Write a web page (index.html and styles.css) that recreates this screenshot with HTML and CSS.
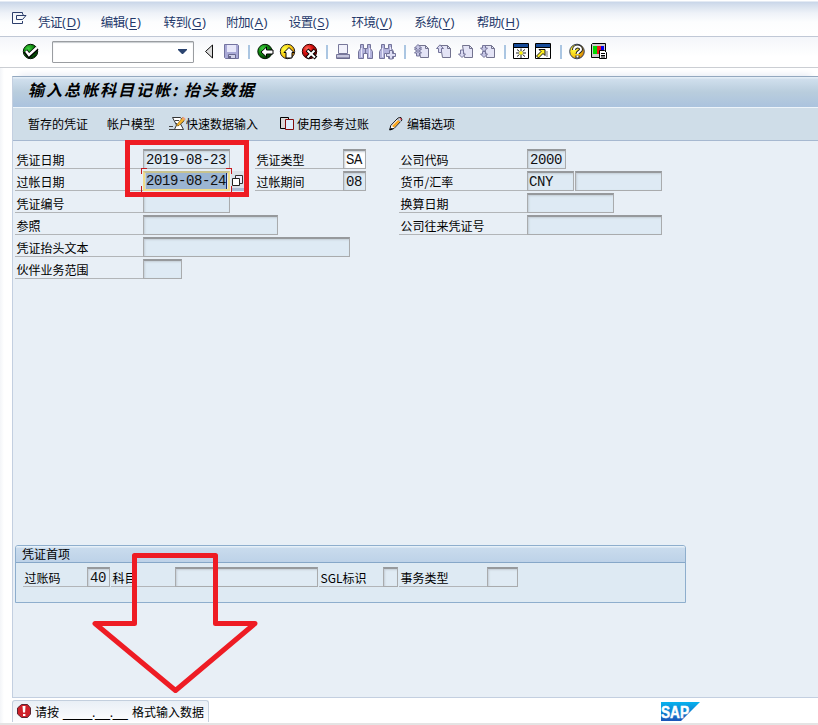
FILE: index.html
```html
<!DOCTYPE html>
<html lang="zh-CN">
<head>
<meta charset="utf-8">
<title>输入总帐科目记帐: 抬头数据</title>
<link rel="stylesheet" href="styles.css">
</head>
<body>
<svg class="defs" width="0" height="0" aria-hidden="true">
  <defs>
    <radialGradient id="green" cx=".35" cy=".3" r=".75"><stop offset="0" stop-color="#3fd03f"/><stop offset=".5" stop-color="#0c840c"/><stop offset="1" stop-color="#002800"/></radialGradient>
    <radialGradient id="yellow" cx=".3" cy=".35" r=".8"><stop offset="0" stop-color="#ffff40"/><stop offset=".6" stop-color="#f8c810"/><stop offset="1" stop-color="#c06000"/></radialGradient>
    <radialGradient id="red" cx=".35" cy=".3" r=".8"><stop offset="0" stop-color="#ff7060"/><stop offset=".4" stop-color="#dc1010"/><stop offset="1" stop-color="#500000"/></radialGradient>
    <linearGradient id="sapblue" x1="0" y1="0" x2="0" y2="1"><stop offset="0" stop-color="#06b2ee"/><stop offset="1" stop-color="#1b55b8"/></linearGradient>
    <g id="page"><path d="M4.500 1.500h7l3 3v9h-8z" fill="#e4e4f6" stroke="#73738f"/><path d="M11.500 1.500v3h3" fill="none" stroke="#73738f"/></g>
  </defs>
</svg>
<div class="window">
  <nav class="menubar">
    <svg class="menu-icon" width="16" height="14" viewBox="0 0 16 14"><path d="M11.500 3V1.500h-10v11h10V10" fill="none" stroke="#2b3d6b"/><path d="M5.500 8.500v-4h9.500L11.500 8.500h-6M12 3v2" fill="none" stroke="#2b3d6b"/></svg>
    <span class="menu">凭证<i>(<u>D</u>)</i></span><span class="menu">编辑<i>(<u>E</u>)</i></span><span class="menu">转到<i>(<u>G</u>)</i></span><span class="menu">附加<i>(<u>A</u>)</i></span><span class="menu">设置<i>(<u>S</u>)</i></span><span class="menu">环境<i>(<u>V</u>)</i></span><span class="menu">系统<i>(<u>Y</u>)</i></span><span class="menu">帮助<i>(<u>H</u>)</i></span>
  </nav>

  <div class="toolbar">
    <svg class="ok" width="18" height="16" viewBox="0 0 18 16"><circle cx="8.500" cy="7.500" r="7.200" fill="url(#green)" stroke="#031703"/><path d="M3.500 7l3.500 4.500L15 4" fill="none" stroke="#000" stroke-width="4.500"/><path d="M4 7l3 4 8-7.500" fill="none" stroke="#fff" stroke-width="2.400"/></svg>
    <div class="combo"><svg width="9" height="5" viewBox="0 0 9 5"><path d="M0 0h9v1L5 5H4L0 1z" fill="#2b4470"/></svg></div>
    <svg class="collapse" width="10" height="16" viewBox="0 0 10 16"><path d="M8.500 1v13L1.500 7.500z" fill="#dcdcdc" stroke="#111"/></svg>
    <svg class="save" width="16" height="16" viewBox="0 0 16 16"><path d="M.5.5h13l1 1v13H1.500l-1-1z" fill="#a9a9d6" stroke="#7373a0"/><path d="M3 1h9v7H3z" fill="#e7e7fa"/><path d="M4.500 10.500h7v4h-7z" fill="#d2d2ea" stroke="#68688e"/><path d="M5 12h2v2H5z" fill="#68688e"/></svg>
    <span class="sep"></span>
    <div class="icons">
      <svg width="16" height="16" viewBox="0 0 16 16"><circle cx="7" cy="7.500" r="7.200" fill="url(#green)" stroke="#031703"/><path d="M3 8l5.500-5v3H15v4H8.500v3z" fill="#fff" stroke="#000"/></svg>
      <svg width="16" height="16" viewBox="0 0 16 16"><circle cx="7.500" cy="7.500" r="7.200" fill="url(#yellow)" stroke="#222"/><path d="M9 3.500l5 5h-2v5.500H6V8.500H4z" fill="#fff" stroke="#000"/></svg>
      <svg width="16" height="16" viewBox="0 0 16 16"><circle cx="7.500" cy="7.500" r="7.200" fill="url(#red)" stroke="#300"/><path d="M5 6l9 8M13 6l-8 8" stroke="#000" stroke-width="4"/><path d="M5.500 6.500l7.500 7M12.500 6.500l-7 7" stroke="#fff" stroke-width="2"/></svg>
    </div>
    <span class="sep"></span>
    <div class="icons">
      <svg width="16" height="16" viewBox="0 0 16 16"><path d="M2.500.5h9v9h-9z" fill="#f1f1fb" stroke="#77779a"/><path d="M.5 10.500h13v4H.5z" fill="#c5c5de" stroke="#77779a"/><path d="M1 14h13" stroke="#5f5f82"/></svg>
      <svg width="16" height="16" viewBox="0 0 16 16"><path d="M2.500.5h3v4h4v-4h3v4l2 3v7h-5v-5h-4v5h-5v-7l2-3z" fill="#b3b3dc" stroke="#74749a"/><path d="M3.500 4v9M11.500 4v9" stroke="#e8e8fb"/><path d="M7.500 5v4" stroke="#74749a"/></svg>
      <svg width="16" height="16" viewBox="0 0 16 16"><path d="M1.500.5h3v4h4v-4h3v4l2 3v7h-5v-5h-4v5h-5v-7l2-3z" fill="#b3b3dc" stroke="#74749a"/><path d="M2.500 4v9M10.500 3v5" stroke="#e8e8fb"/><path d="M9.500 6.500h3v3h3v3h-3v2.500h-3v-2.500h-3v-3h3z" fill="#dedef4" stroke="#74749a"/></svg>
    </div>
    <span class="sep"></span>
    <div class="icons">
      <svg width="16" height="16" viewBox="0 0 16 16"><use href="#page"/><path d="M4 .5l3.500 3.500H5.500v1h2L4 8.500.5 5h2V4h-2zM4 5.500l3.500 3.500H5.500v3H2.500V9h-2z" fill="#c6c6e5" stroke="#74749a"/></svg>
      <svg width="16" height="16" viewBox="0 0 16 16"><use href="#page"/><path d="M4 .8l3.500 3.700H5.500v4h-3v-4h-2z" fill="#dadaf2" stroke="#74749a"/></svg>
      <svg width="16" height="16" viewBox="0 0 16 16"><use href="#page"/><path d="M4 13.500L7.500 10H5.500V6h-3v4h-2z" fill="#dadaf2" stroke="#74749a"/></svg>
      <svg width="16" height="16" viewBox="0 0 16 16"><use href="#page"/><path d="M4 7.500L7.500 4H5.500V1.500h-3V4h-2zM4 13.500L7.500 10H5.500V7.500h-3V10h-2z" fill="#c6c6e5" stroke="#74749a"/></svg>
    </div>
    <span class="sep"></span>
    <div class="icons">
      <svg width="16" height="16" viewBox="0 0 16 16"><path d="M-.5-.5h15v15h-15z" fill="#fff" stroke="#000"/><path d="M0 0h14v3H0z" fill="#174b99"/><path d="M0 3.500h14" stroke="#000"/><path d="M7 4.500v3M7 10v4M2 9h3.500M8.500 9H12M3 5.500l2.500 2M11 5.500l-2.500 2M3 12.500l2.500-2M11 12.500l-2.500-2" stroke="#222"/><path d="M5.500 7.500h3v3h-3z" fill="#fff700"/></svg>
      <svg width="16" height="16" viewBox="0 0 16 16"><path d="M-.5-.5h15v15h-15z" fill="#fff" stroke="#000"/><path d="M0 0h14v3H0z" fill="#174b99"/><path d="M0 3.500h14" stroke="#000"/><path d="M10 7h2v6h-2z" fill="#bbb"/><path d="M3 5.500h6v6l-2-2-4.500 4.500L.5 12 5 7.500z" fill="#ffef22" stroke="#111"/></svg>
    </div>
    <span class="sep"></span>
    <div class="icons">
      <svg width="16" height="16" viewBox="0 0 16 16"><circle cx="7" cy="7.500" r="7.300" fill="url(#yellow)" stroke="#35425e"/><path d="M4 6C4 1.500 11 1.500 11 5.500c0 2-3.500 2-3.500 4.500M7.500 11.500V14" fill="none" stroke="#222" stroke-width="4"/><path d="M4 6C4 1.500 11 1.500 11 5.500c0 2-3.500 2-3.500 4.500M7.500 11.500v2" fill="none" stroke="#fff" stroke-width="2"/></svg>
      <svg width="16" height="16" viewBox="0 0 16 16"><path d="M.5-.5h13v14h-14V.5z" fill="#ccc" stroke="#000"/><path d="M1 2h4v8H1z" fill="#00d800"/><path d="M5 2h4v8H5z" fill="#f01818"/><path d="M9 2h3v8H9z" fill="#0000ef"/><path d="M7.500 6.500h5l2 2v6h-7z" fill="#fff" stroke="#000"/><path d="M9 9.500h4M9 11.500h4M9 13h4" stroke="#000"/></svg>
    </div>
  </div>

  <main class="screen">
    <h1><span class="main-title">输入总帐科目记帐:</span><span>抬头数据</span></h1>
    <div class="actions">
      <span class="act held">暂存的凭证</span>
      <span class="act model">帐户模型</span>
      <span class="act fast"><svg width="17" height="16" viewBox="0 0 17 16"><path d="M3.500 1.500h8l3 4-3 2.500 3 5.500h-9l2-4.500z" fill="#fff" stroke="#333"/><path d="M0 10.500h4M0 13.500h14M6 4.500h4M7 7l3 3" stroke="#444"/><path d="M8 8.500l5.500-7L16 3.500 10 9.500 7.500 10z" fill="#f8b52c" stroke="#775510" stroke-width=".6"/><path d="M13.500 1.500L16 3.500" stroke="#f0a080" stroke-width="2"/></svg>快速数据输入</span>
      <span class="act ref"><svg width="15" height="15" viewBox="0 0 15 15"><path d="M.5.500h8v11h-8z" fill="#d9d9d9" stroke="#000"/><path d="M5.500 2.500h8v10h-8z" fill="#ddecfb" stroke="#850b0b"/></svg>使用参考过账</span>
      <span class="act opt"><svg width="14" height="14" viewBox="0 0 14 14"><path d="M.8 12.500l1-4L9 1l3-.5L13 3 5 11.500z" fill="#fff" stroke="#111"/><path d="M3 9l6.500-6.500L11.500 4 5 10.500z" fill="#f9a51b"/><path d="M8.500 2L12 4.500" stroke="#a7b4ca" stroke-width="1.500"/><path d="M11 1.500l1.500 1" stroke="#d34" stroke-width="1.500"/><path d="M.5 12.800l3-1" stroke="#000" stroke-width="1.500"/></svg>编辑选项</span>
    </div>

    <div class="form">
      <div class="col c1">
        <div class="row"><label>凭证日期</label><div class="field date">2019-08-23</div></div>
        <div class="row"><label>过帐日期</label><div class="field date focus"><mark>2019-08-24</mark></div><svg class="pick" width="16" height="20" viewBox="0 0 16 20"><path d="M0 0h16v20H0z" fill="#dbe1e9"/><path d="M0 17h16v3H0z" fill="#aabad4"/><path d="M4.500 4.500h7v8h-7z" fill="#eef" stroke="#333"/><path d="M1.500 7.500h7v7h-7z" fill="#fff" stroke="#222"/></svg></div>
        <div class="row"><label>凭证编号</label><div class="field date"></div></div>
        <div class="row"><label>参照</label><div class="field w135"></div></div>
        <div class="row"><label>凭证抬头文本</label><div class="field w207"></div></div>
        <div class="row"><label>伙伴业务范围</label><div class="field w39"></div></div>
      </div>
      <div class="col c2">
        <div class="row"><label>凭证类型</label><div class="field w23 white">SA</div></div>
        <div class="row"><label>过帐期间</label><div class="field w23">08</div></div>
      </div>
      <div class="col c3">
        <div class="row"><label>公司代码</label><div class="field w39">2000</div></div>
        <div class="row"><label>货币/汇率</label><div class="field w47">CNY</div><div class="field date gap"></div></div>
        <div class="row"><label>换算日期</label><div class="field date"></div></div>
        <div class="row"><label>公司往来凭证号</label><div class="field w135"></div></div>
      </div>
    </div>

    <section class="group">
      <h2>凭证首项</h2>
      <div class="row">
        <label class="l64">过账码</label><div class="field w23">40</div>
        <label class="l64 next">科目</label><div class="field w143"></div>
        <label class="l64 next">SGL标识</label><div class="field w15"></div>
        <label class="l88 next">事务类型</label><div class="field w31"></div>
      </div>
    </section>
  </main>

  <footer class="status">
    <div class="message">
      <svg width="15" height="15" viewBox="0 0 15 15"><path d="M4.500.5h6l3 3.500v6l-3 3.500h-6l-4-3.500V4z" fill="#cf2029" stroke="#5b2430"/><path d="M5.500 2h3l-.4 6.500H6zM6 10h2.400v2H6z" fill="#fff"/></svg>
      <span class="msg1">请按</span><span class="blanks">____.__.__</span><span>格式输入数据</span>
    </div>
    <svg class="sap" width="39" height="19" viewBox="0 0 39 19"><path d="M0 0h39L20 19H0z" fill="url(#sapblue)"/><text x="0" y="15.500" textLength="28" lengthAdjust="spacingAndGlyphs">SAP</text></svg>
  </footer>

  <div class="highlight"></div>
  <svg class="arrow" width="170" height="146" viewBox="90 551 170 146"><path d="M134.500 555.500h81v68H255L175.500 690.500 95 623.500h39.500z"/></svg>
</div>
</body>
</html>
```
FILE: styles.css
```css
* { box-sizing: border-box; }
body { margin: 0; background: #fff; }
.defs { position: absolute; }
svg { display: block; flex: none; overflow: visible; }

.window {
  position: relative;
  display: flex;
  flex-direction: column;
  width: 818px;
  height: 725px;
  overflow: hidden;
  background: linear-gradient(90deg, #f3f5f8, #fff 4px);
  color: #000;
  font: 12px/16px "Noto Sans CJK SC", sans-serif;
  white-space: nowrap;
}

.menubar {
  display: flex;
  align-items: center;
  height: 37px;
  padding: 8px 0 0 11px;
  background: linear-gradient(#fff 1px, #c9d6e9 2px, #d5dfed 5px, #eef2f8 13px, #fcfdfe 22px, #fff);
  border-bottom: 1px solid #c0c8d6;
  color: #24386a;
}
.menu-icon { margin: -8px 11px 0 0; }
.menu { display: flex; width: 62.7px; font-size: 12.5px; letter-spacing: -.5px; }
.menu i { font: 13.5px/17px "Open Sans", sans-serif; letter-spacing: .4px; }
.menu u { text-underline-offset: 2px; }

.toolbar {
  display: flex;
  align-items: center;
  height: 31px;
  padding-left: 22px;
  background: linear-gradient(#f4f6fa, #fff 65%);
  border-bottom: 1px solid #cbced3;
}
.combo {
  display: flex;
  align-items: center;
  justify-content: flex-end;
  width: 142px;
  height: 22px;
  margin: 0 10px 0 12px;
  padding-right: 6px;
  border: 1px solid #9a9da1;
  border-radius: 1px;
  background: #fff;
  box-shadow: inset 0 1px 1px #c8ccd0;
}
.combo svg { margin-bottom: 2px; }
.save { margin-left: 10px; }
.sep { width: 2px; height: 14px; margin: 0 8px; background: #abc6e2; }
.icons { display: flex; gap: 6px; }

.screen {
  display: flex;
  flex-direction: column;
  height: 622px;
  margin: 8px 0 0 12px;
  border: 1px solid #c3cfe0;
  border-width: 1px 0 1px 1px;
  background: #e8eff6;
  border-top-color: #93a8bf;
  box-shadow: 0 -8px 7px -7px #e3e8f2;
}
h1 {
  display: flex;
  height: 31px;
  margin: 0;
  padding-left: 15px;
  border-bottom: 1px solid #edf4fa;
  background: linear-gradient(#e3edf6 0 1px, #d0dfed 2px, #b9cddd 50%, #abc3de);
  font: italic bold 16px/25px "Noto Sans CJK SC", sans-serif;
  letter-spacing: 2px;
}
.main-title { width: 156px; }
.actions {
  display: flex;
  align-items: center;
  height: 33px;
  background: #cfdde8;
  border-bottom: 1px solid #a6b8d0;
  padding-left: 15px;
}
.act { display: flex; align-items: center; }
.held { width: 79px; }
.model { width: 62px; }
.fast { width: 111px; }
.ref { width: 109px; gap: 2px; }
.opt { gap: 4px; }

.form { display: flex; height: 404px; padding: 6px 0 0 2px; }
.col { flex: none; }
.c1 { width: 240px; }
.c2 { width: 144px; }
.row { display: flex; align-items: flex-end; height: 22px; }
label {
  flex: none;
  width: 128px;
  height: 19px;
  padding: 2px 0 0 1.5px;
  line-height: 16px;
  border-bottom: 1px solid #b2b5b8;
}
.c2 label { width: 88px; }
.field {
  flex: none;
  height: 20px;
  padding-left: 2px;
  border: 1px solid #a9abad;
  border-top: 2px solid #96999c;
  background: #deeaf4;
  box-shadow: inset 1px 1px 2px #c4cdd6;
  color: #111;
  font: 14px/18px "Liberation Mono", monospace;
  letter-spacing: -.4px;
}
.date { width: 87px; }
.gap { margin-left: 1px; }
.w15 { width: 15px; }
.w23 { width: 23px; }
.w31 { width: 31px; }
.w39 { width: 39px; }
.w47 { width: 47px; padding-left: 1px; }
.w135 { width: 135px; }
.w143 { width: 143px; }
.w207 { width: 207px; }
.white { background: #fff; }
.focus { position: relative; padding: 0 1px; border: 2px solid #f0dc8a; border-top-color: #c9c38f; line-height: 17px; }
.focus::before, .focus::after { content: ""; position: absolute; left: -4px; right: -4px; height: 6px; border: solid #c51b20; border-width: 0 1px; }
.focus::before { top: -5px; background: linear-gradient(90deg, #c51b20 5px, transparent 5px 84px, #c51b20 84px) top / 100% 1px no-repeat; }
.focus::after { bottom: -3px; }
mark { display: block; width: 81px; height: 16px; background: #9bb5d3; border-right: 1px solid #16256a; color: inherit; }
.pick { margin-left: 1px; }

.group {
  width: 671px;
  height: 58px;
  margin-left: 2px;
  border: 1px solid #8eaecd;
  border-radius: 3px 3px 0 0;
  background: #deeaf3;
}
h2 {
  height: 17px;
  margin: 0;
  padding-left: 6px;
  border-bottom: 1px solid #86a7c8;
  border-radius: 2px 2px 0 0;
  background: linear-gradient(#e6f0f8 0 1px, #c9dbed 2px, #bdd2e8);
  font: 12px/15px "Noto Sans CJK SC", sans-serif;
}
.group .row { height: 24px; padding-left: 7px; }
.group .field { background: #e0ebf4; }
.group .l64 { width: 64px; }
.group .l88 { width: 88px; }
.group .next { margin-left: 1px; }

.status {
  display: flex;
  justify-content: flex-start;
  height: 27px;
  padding: 2px 0 0 12px;
  border-bottom: 2px solid #e4e4e4;
}
.message {
  display: flex;
  align-items: center;
  width: 197px;
  height: 22px;
  padding: 1px 0 0 5px;
  border: 1px solid #c3cfde;
  border-bottom: 0;
  border-radius: 3px 3px 0 0;
  background: linear-gradient(#e9eff6, #fdfdfe);
}
.message svg { margin: -2px 3px 0 -1px; }
.msg1 { width: 28px; }
.blanks { width: 69px; font: 14px/16px "Liberation Sans", sans-serif; letter-spacing: -.600px; }
.sap { margin: 2px 0 0 452px; }
.sap text { fill: #fff; stroke: #fff; stroke-width: .5px; font: bold 16px "Liberation Sans", sans-serif; }

.highlight { position: absolute; left: 125px; top: 140px; width: 124px; height: 57px; border: 5px solid #ee1c24; }
.arrow { position: absolute; left: 90px; top: 551px; }
.arrow path { fill: none; stroke: #ee1c24; stroke-width: 5; stroke-linejoin: round; }
```
